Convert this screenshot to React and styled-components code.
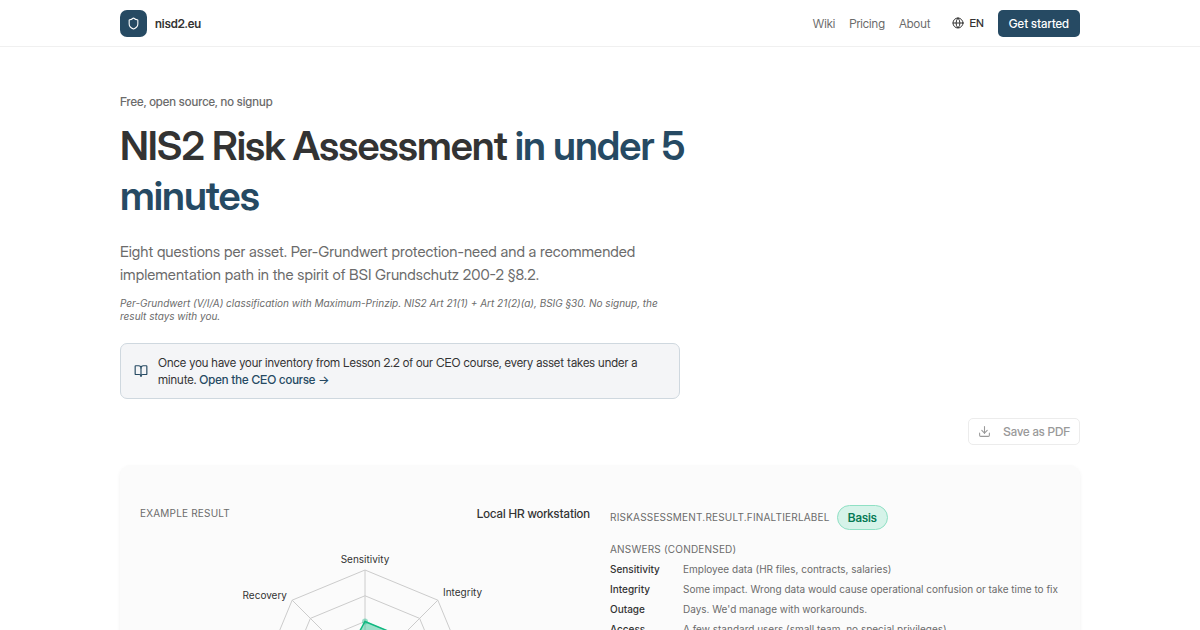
import React from "react";
import styled, { createGlobalStyle, css } from "styled-components";
import { Shield, Globe, BookOpen, Download } from "lucide-react";

const colors = {
  brand: "#264a63",
  ink: "#333333",
  muted: "#6b6b6b",
  line: "#f0f0f0",
  green: "#10b981",
};

const fonts = {
  display: '"Inter Display", Inter, "Liberation Sans", sans-serif',
  text: 'Inter, "Liberation Sans", sans-serif',
};

const GlobalStyle = createGlobalStyle`
  *, *::before, *::after { box-sizing: border-box; }
  body {
    margin: 0;
    background: #ffffff;
    color: ${colors.ink};
    font-family: ${fonts.display};
    font-size: 12px;
    line-height: 17px;
  }
  h1, h2, h3, p, dl, dd { margin: 0; }
  button { font: inherit; cursor: pointer; }
  a { text-decoration: none; }
`;

const Page = styled.div`
  height: 100vh;
  overflow: hidden;
`;

const container = css`
  width: 100%;
  max-width: 1000px;
  margin: 0 auto;
  padding: 0 20px;
`;

const smallText = css`
  font-family: ${fonts.text};
  font-size: 10px;
  line-height: 13px;
`;

const Header = styled.header`
  border-bottom: 1px solid ${colors.line};
`;

const HeaderInner = styled.div`
  ${container}
  display: flex;
  align-items: center;
  justify-content: space-between;
  height: 46px;
`;

const Brand = styled.a`
  display: flex;
  align-items: center;
  gap: 8px;
  color: ${colors.ink};
  font-weight: 600;
`;

const BrandMark = styled.span`
  display: grid;
  place-items: center;
  width: 27px;
  height: 27px;
  border-radius: 7px;
  background: ${colors.brand};
  color: #ffffff;
`;

const Nav = styled.nav`
  display: flex;
  align-items: center;
  gap: 14px;
`;

const NavLink = styled.a`
  color: ${colors.muted};
`;

const LanguageButton = styled.button`
  display: flex;
  align-items: center;
  gap: 5px;
  margin-left: 8px;
  padding: 0;
  border: 0;
  background: none;
  color: ${colors.ink};
  font-size: 11px;
  font-weight: 500;
`;

const PrimaryButton = styled.button`
  height: 27px;
  padding: 0 11px;
  border: 0;
  border-radius: 5px;
  background: ${colors.brand};
  color: #ffffff;
  font-weight: 500;
`;

const Main = styled.main`
  ${container}
  padding-top: 46px;
`;

const Intro = styled.section`
  max-width: 560px;
`;

const Eyebrow = styled.p`
  color: ${colors.muted};
  font-weight: 500;
`;

const Title = styled.h1`
  max-width: 580px;
  margin-top: 11px;
  font-size: 40px;
  line-height: 50px;
  font-weight: 600;
  letter-spacing: -1px;
`;

const Accent = styled.span`
  color: ${colors.brand};
`;

const Lead = styled.p`
  margin-top: 19px;
  color: ${colors.muted};
  font-size: 15px;
  line-height: 23px;
`;

const Note = styled.p`
  ${smallText}
  margin-top: 11px;
  color: ${colors.muted};
  font-style: italic;
`;

const Callout = styled.aside`
  display: flex;
  align-items: center;
  gap: 10px;
  margin-top: 20px;
  padding: 10px 13px;
  border: 1px solid #cfd8df;
  border-radius: 7px;
  background: #f4f5f7;

  svg {
    flex: none;
    color: ${colors.brand};
  }
`;

const CalloutLink = styled.a`
  color: ${colors.brand};
  font-weight: 500;
`;

const Toolbar = styled.div`
  display: flex;
  justify-content: flex-end;
  margin-top: 19px;
`;

const OutlineButton = styled.button`
  display: flex;
  align-items: center;
  gap: 12px;
  height: 27px;
  padding: 0 9px;
  border: 1px solid #e5e5e5;
  border-radius: 5px;
  background: #ffffff;
  color: ${colors.ink};
  font-weight: 500;

  &:disabled {
    border-color: #ececec;
    color: #999999;
    cursor: default;
  }
`;

const Card = styled.section`
  display: grid;
  grid-template-columns: 1fr 1fr;
  gap: 20px;
  margin-top: 20px;
  padding: 40px 20px;
  border-radius: 10px;
  background: #fbfbfb;
  box-shadow: 0 2px 4px rgba(0, 0, 0, 0.06);
`;

const ChartHeader = styled.div`
  display: flex;
  justify-content: space-between;
  align-items: center;
`;

const Caption = styled.h3`
  ${smallText}
  color: ${colors.muted};
  font-weight: 400;
  letter-spacing: 0.02em;
  text-transform: uppercase;
`;

const AssetName = styled.h2`
  font-size: 12px;
  line-height: 17px;
  font-weight: 500;
`;

const Chart = styled.svg`
  display: block;
  width: 100%;
  height: 280px;
  margin-top: 11px;
  font-family: ${fonts.text};
  font-size: 10px;
`;

const TierRow = styled.div`
  display: flex;
  align-items: center;
  gap: 7px;
  margin-bottom: 13px;
`;

const Badge = styled.span`
  padding: 3px 10px;
  border: 1px solid #8fe0c4;
  border-radius: 13px;
  background: #d6f3e9;
  color: #067a55;
  font-weight: 600;
`;

const Answers = styled.dl`
  ${smallText}
  display: grid;
  grid-template-columns: 66px 1fr;
  gap: 7px;
  margin-top: 7px;

  dt { font-weight: 500; }
  dd { color: ${colors.muted}; }
`;

const answers = [
  ["Sensitivity", "Employee data (HR files, contracts, salaries)"],
  ["Integrity", "Some impact. Wrong data would cause operational confusion or take time to fix"],
  ["Outage", "Days. We'd manage with workarounds."],
  ["Access", "A few standard users (small team, no special privileges)"],
];

const RADIUS = 103;
const CENTER = { x: 225, y: 140 };
const values = [0.5, 0.5, 0.25, 0.25, 0.25, 0.25, 0.25, 0.25];

const point = (index, ratio) => {
  const angle = (index * Math.PI) / 4;
  return [
    CENTER.x + Math.sin(angle) * RADIUS * ratio,
    CENTER.y - Math.cos(angle) * RADIUS * ratio,
  ];
};

const ring = (ratio) => values.map((_, i) => point(i, ratio).join(",")).join(" ");

function RadarChart() {
  return (
    <Chart viewBox="0 0 450 280" role="img" aria-label="Risk profile">
      <g fill="none" stroke="#cccccc">
        {[0.25, 0.5, 0.75, 1].map((r) => (
          <polygon key={r} points={ring(r)} />
        ))}
        {values.map((_, i) => {
          const [x, y] = point(i, 1);
          return <line key={i} x1={CENTER.x} y1={CENTER.y} x2={x} y2={y} />;
        })}
      </g>
      <polygon
        points={values.map((v, i) => point(i, v).join(",")).join(" ")}
        fill={colors.green}
        fillOpacity="0.4"
        stroke={colors.green}
        strokeWidth="1.5"
      />
      {values.map((v, i) => {
        const [cx, cy] = point(i, v);
        return <circle key={i} cx={cx} cy={cy} r="3" fill={colors.green} fillOpacity="0.4" />;
      })}
      <g fill={colors.ink}>
        <text x="225" y="30" textAnchor="middle">Sensitivity</text>
        <text x="303" y="63">Integrity</text>
        <text x="147" y="66" textAnchor="end">Recovery</text>
      </g>
    </Chart>
  );
}

export default function App() {
  return (
    <Page>
      <GlobalStyle />
      <Header>
        <HeaderInner>
          <Brand href="#">
            <BrandMark><Shield size={13} /></BrandMark>
            nisd2.eu
          </Brand>
          <Nav>
            <NavLink href="#wiki">Wiki</NavLink>
            <NavLink href="#pricing">Pricing</NavLink>
            <NavLink href="#about">About</NavLink>
            <LanguageButton type="button"><Globe size={12} />EN</LanguageButton>
            <PrimaryButton type="button">Get started</PrimaryButton>
          </Nav>
        </HeaderInner>
      </Header>
      <Main>
        <Eyebrow>Free, open source, no signup</Eyebrow>
        <Title>NIS2 Risk Assessment <Accent>in under 5 minutes</Accent></Title>
        <Intro>
          <Lead>
            Eight questions per asset. Per-Grundwert protection-need and a recommended
            implementation path in the spirit of BSI Grundschutz 200-2 §8.2.
          </Lead>
          <Note>
            Per-Grundwert (V/I/A) classification with Maximum-Prinzip. NIS2 Art 21(1) + Art
            21(2)(a), BSIG §30. No signup, the result stays with you.
          </Note>
          <Callout>
            <BookOpen size={14} />
            <p>
              Once you have your inventory from Lesson 2.2 of our CEO course, every asset takes
              under a minute. <CalloutLink href="#course">Open the CEO course →</CalloutLink>
            </p>
          </Callout>
        </Intro>
        <Toolbar>
          <OutlineButton type="button" disabled><Download size={13} />Save as PDF</OutlineButton>
        </Toolbar>
        <Card>
          <div>
            <ChartHeader>
              <Caption>Example result</Caption>
              <AssetName>Local HR workstation</AssetName>
            </ChartHeader>
            <RadarChart />
          </div>
          <div>
            <TierRow>
              <Caption>riskAssessment.result.finalTierLabel</Caption>
              <Badge>Basis</Badge>
            </TierRow>
            <Caption>Answers (condensed)</Caption>
            <Answers>
              {answers.map(([term, detail]) => (
                <React.Fragment key={term}>
                  <dt>{term}</dt>
                  <dd>{detail}</dd>
                </React.Fragment>
              ))}
            </Answers>
          </div>
        </Card>
      </Main>
    </Page>
  );
}
